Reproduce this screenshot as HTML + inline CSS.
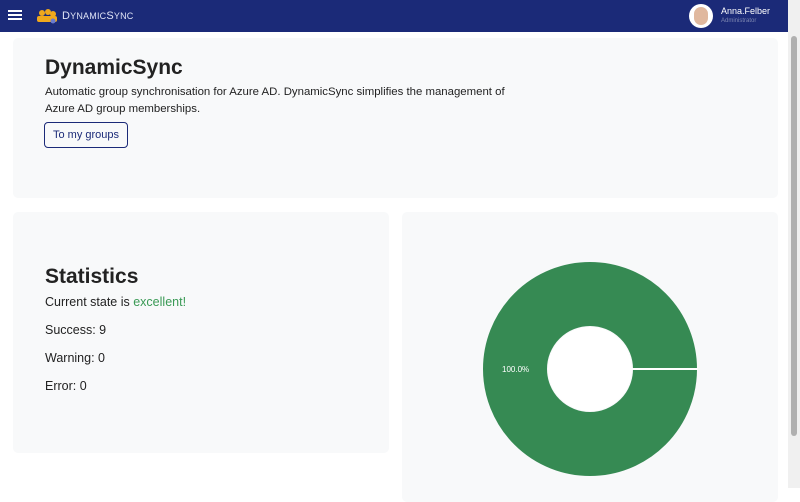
<!DOCTYPE html>
<html><head><style>
body{margin:0;width:800px;height:488px;overflow:hidden;background:#fff;font-family:"Liberation Sans",sans-serif;position:relative}
.nav{position:absolute;left:0;top:0;width:788px;height:32px;background:#1b2a78}
.sb{position:absolute;left:788px;top:0;width:12px;height:488px;background:#f0f0f0}
.sb div{position:absolute;left:3px;top:36px;width:6px;height:400px;background:#b0b0b0;border-radius:3px}
.card{position:absolute;background:#f8f9fa;border-radius:5px}
.btn{display:inline-block;border:1px solid #1b2a78;color:#1b2a78;border-radius:4px;font-size:11px;padding:6px 8px}
</style></head><body>
<div class="nav">
 <div style="position:absolute;left:8px;top:10px;width:14px;height:2px;background:#fff;box-shadow:0 4px #fff,0 8px #fff"></div>
 <svg style="position:absolute;left:36px;top:8px" width="22" height="16"><circle cx="6" cy="5" r="3" fill="#f0a81c"/><circle cx="12" cy="4" r="3" fill="#f0a81c"/><circle cx="17" cy="6" r="3" fill="#f0a81c"/><rect x="1" y="8" width="20" height="6" rx="2" fill="#f0a81c"/><circle cx="17" cy="13" r="2.5" fill="#6a7bd0"/></svg>
 <div style="position:absolute;left:62px;top:10px;color:#dfe3f5;font-size:11px;letter-spacing:.2px">D<span style="font-size:9px">YNAMIC</span>S<span style="font-size:9px">YNC</span></div>
 <div style="position:absolute;left:689px;top:4px;width:24px;height:24px;border-radius:50%;background:#fff"><div style="margin:3px 5px;width:14px;height:18px;border-radius:7px;background:#e0b89e"></div></div>
 <div style="position:absolute;left:721px;top:6px;color:#fff;font-size:9px">Anna.Felber</div>
 <div style="position:absolute;left:721px;top:18px;color:#7d86b0;font-size:6px">Administrator</div>
</div>
<div class="sb"><div></div></div>
<div class="card" style="left:13px;top:38px;width:765px;height:160px">
 <div style="position:absolute;left:32px;top:18px;font-size:21px;font-weight:bold;color:#222">DynamicSync</div>
 <div style="position:absolute;left:32px;top:46px;width:475px;font-size:11.4px;line-height:17px;color:#222">Automatic group synchronisation for Azure AD. DynamicSync simplifies the management of Azure AD group memberships.</div>
 <div class="btn" style="position:absolute;left:31px;top:84px">To my groups</div>
</div>
<div class="card" style="left:13px;top:212px;width:376px;height:241px">
 <div style="position:absolute;left:32px;top:53px;font-size:21px;font-weight:bold;color:#222">Statistics</div>
 <div style="position:absolute;left:32px;top:83px;font-size:12.5px;color:#222">Current state is <span style="color:#3a9a55">excellent!</span></div>
 <div style="position:absolute;left:32px;top:111px;font-size:12.5px;color:#222">Success: 9</div>
 <div style="position:absolute;left:32px;top:139px;font-size:12.5px;color:#222">Warning: 0</div>
 <div style="position:absolute;left:32px;top:167px;font-size:12.5px;color:#222">Error: 0</div>
</div>
<div class="card" style="left:402px;top:212px;width:376px;height:290px">
 <svg style="position:absolute;left:0;top:0" width="376" height="290">
  <circle cx="188" cy="157" r="75" fill="none" stroke="#368a53" stroke-width="64"/>
  <line x1="188" y1="157" x2="296" y2="157" stroke="#fff" stroke-width="2"/>
  <circle cx="188" cy="157" r="42" fill="#fff"/>
  <text x="100" y="160" font-size="8" fill="#fff" font-family="Liberation Sans">100.0%</text>
 </svg>
</div>
</body></html>
